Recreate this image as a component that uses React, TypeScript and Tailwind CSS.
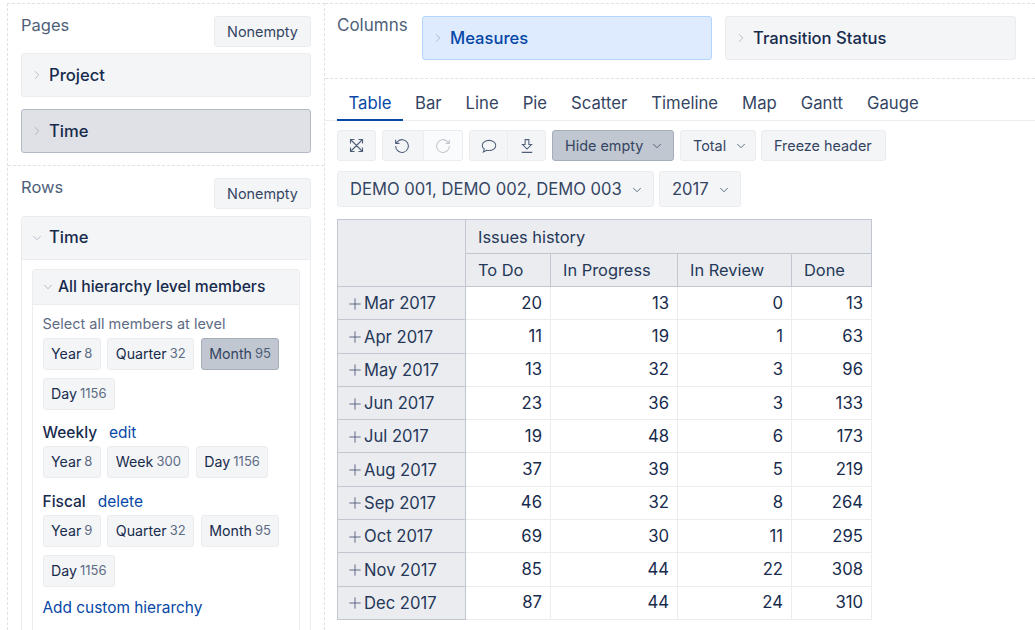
import React from "react";
import { ChevronRight, ChevronDown, Plus } from "lucide-react";

const Chev = ({ open, cls = "text-[#8d96a8]" }: { open?: boolean; cls?: string }) =>
  open ? <ChevronDown size={14} strokeWidth={1} className={cls} /> : <ChevronRight size={14} strokeWidth={1} className={cls} />;

const Nonempty = () => (
  <div className="flex h-[31px] w-[97px] items-center justify-center rounded-[3px] border border-[#ebecf0] bg-[#f4f5f7] text-[14.4px] text-[#344563]">Nonempty</div>
);

const Dim = ({ label, cls = "", h = "h-[44px]" }: { label: string; cls?: string; h?: string }) => (
  <div className={`flex ${h} items-center rounded-[3px] border pl-[8px] text-[16.6px] font-[450] text-[#172b4d] ${cls || "border-[#ebecf0] bg-[#f4f5f7]"}`}>
    <Chev />
    <span className="ml-[5px]">{label}</span>
  </div>
);

const Chip = ({ name, n, active }: { name: string; n: number; active?: boolean }) => (
  <div className={`flex h-[32px] items-center rounded-[3px] border px-[7.5px] text-[14.2px] ${active ? "border-[#a5adba] bg-[#c1c7d0] text-[#344563]" : "border-[#ebecf0] bg-[#f4f5f7] text-[#172b4d]"}`}>
    {name}
    <span className={`ml-[3px] text-[13px] ${active ? "text-[#505f79]" : "text-[#5e6c84]"}`}>{n}</span>
  </div>
);

const ChipRow = ({ first, children }: { first?: boolean; children: React.ReactNode }) => (
  <div className={`${first ? "mt-[5px]" : "mt-[3px]"} flex flex-wrap gap-x-[6.5px] gap-y-[8px]`}>{children}</div>
);

const rows: [string, number, number, number, number][] = [
  ["Mar 2017", 20, 13, 0, 13],
  ["Apr 2017", 11, 19, 1, 63],
  ["May 2017", 13, 32, 3, 96],
  ["Jun 2017", 23, 36, 3, 133],
  ["Jul 2017", 19, 48, 6, 173],
  ["Aug 2017", 37, 39, 5, 219],
  ["Sep 2017", 46, 32, 8, 264],
  ["Oct 2017", 69, 30, 11, 295],
  ["Nov 2017", 85, 44, 22, 308],
  ["Dec 2017", 87, 44, 24, 310],
];

const Btn = ({ children, cls = "" }: { children: React.ReactNode; cls?: string }) => (
  <div className={`flex h-[31px] items-center rounded-[3px] border text-[14.4px] ${cls || "border-[#ebecf0] bg-[#f4f5f7] text-[#344563]"}`}>{children}</div>
);

const IconBox = ({ children, cls = "" }: { children: React.ReactNode; cls?: string }) => (
  <div className={`flex h-full flex-1 items-center justify-center ${cls}`}>{children}</div>
);

const thCls = "border border-[#c1c7d0] bg-[#ebecf0] font-normal";
const tdCls = "border border-[#ebecf0] pr-[8px] text-right text-[16.7px] text-[#172b4d]";

export default function App() {
  return (
    <div className="h-[630px] w-[1035px] overflow-hidden bg-white font-['Inter','Liberation_Sans',sans-serif]">
      <div className="flex pt-[3px]">
        <div className="ml-[7px] h-[627px] w-[318px] shrink-0 border-x border-t border-dashed border-[#dfe1e6]">
          <section className="h-[162px] border-b border-dashed border-[#dfe1e6] px-[13px] pt-[12px]">
            <div className="flex items-start justify-between">
              <span className="text-[16.5px] leading-[18px] text-[#505f79]">Pages</span>
              <Nonempty />
            </div>
            <div className="mt-[6px] flex flex-col gap-[12px]">
              <Dim label="Project" />
              <Dim label="Time" cls="border-[#b3bac5] bg-[#dfe1e6]" />
            </div>
          </section>
          <section className="px-[13px] pt-[12px]">
            <div className="flex items-start justify-between">
              <span className="text-[16.5px] leading-[18px] text-[#505f79]">Rows</span>
              <Nonempty />
            </div>
            <div className="mt-[7px] rounded-[3px] border border-[#ebecf0] pb-[20px]">
              <div className="flex h-[43px] items-center border-b border-[#ebecf0] bg-[#f4f5f7] pb-[1px] pl-[8px] text-[16.6px] font-[450] text-[#172b4d]">
                <Chev open />
                <span className="ml-[5px]">Time</span>
              </div>
              <div className="mx-[10px] mt-[9px] rounded-[3px] border border-[#ebecf0]">
                <div className="flex h-[35px] items-center border-b border-[#ebecf0] bg-[#f4f5f7] pl-[8px] text-[15.7px] font-[450] text-[#172b4d]">
                  <Chev open />
                  <span className="ml-[3px]">All hierarchy level members</span>
                </div>
                <div className="pb-[40px] pl-[9.5px] pr-[6px] pt-[10px]">
                  <div className="text-[14.5px] leading-[18px] text-[#5e6c84]">Select all members at level</div>
                  <ChipRow first>
                    <Chip name="Year" n={8} />
                    <Chip name="Quarter" n={32} />
                    <Chip name="Month" n={95} active />
                    <Chip name="Day" n={1156} />
                  </ChipRow>
                  <div className="mt-[13px] flex h-[20px] items-center gap-[12px] text-[15.5px] font-[450] text-[#172b4d]">
                    Weekly<span className="font-normal text-[#0747a6]">edit</span>
                  </div>
                  <ChipRow>
                    <Chip name="Year" n={8} />
                    <Chip name="Week" n={300} />
                    <Chip name="Day" n={1156} />
                  </ChipRow>
                  <div className="mt-[14px] flex h-[20px] items-center gap-[12px] text-[15.5px] font-[450] text-[#172b4d]">
                    Fiscal<span className="font-normal text-[#0747a6]">delete</span>
                  </div>
                  <ChipRow>
                    <Chip name="Year" n={9} />
                    <Chip name="Quarter" n={32} />
                    <Chip name="Month" n={95} />
                    <Chip name="Day" n={1156} />
                  </ChipRow>
                  <div className="mt-[9px] text-[15.4px] text-[#0747a6]">Add custom hierarchy</div>
                </div>
              </div>
            </div>
          </section>
        </div>

        <div className="min-w-0 flex-1 border-t border-dashed border-[#dfe1e6]">
          <section className="flex h-[75px] border-b border-dashed border-[#dfe1e6] pl-[12px] pt-[12px]">
            <span className="w-[85px] text-[17px] leading-[18px] text-[#505f79]">Columns</span>
            <div className="flex w-[290px] shrink-0 flex-col">
              <Dim label="Measures" cls="border-[#b3d4ff] bg-[#deebff] !text-[#0747a6]" />
            </div>
            <div className="ml-[13px] flex w-[291px] shrink-0 flex-col">
              <Dim label="Transition Status" />
            </div>
          </section>

          <div className="mt-[11px] flex h-[31px] border-b border-[#ebecf0] text-[16.7px] text-[#344563]">
            <div className="ml-[12px] flex h-[31px] w-[66px] items-start justify-center border-b-2 border-[#0747a6] pt-[1px] text-[#0747a6]">Table</div>
            {["Bar", "Line", "Pie", "Scatter", "Timeline", "Map", "Gantt", "Gauge"].map((t) => (
              <div key={t} className="flex h-[31px] items-start px-[12px] pt-[1px]">{t}</div>
            ))}
          </div>

          <div className="ml-[12px] mt-[9px] flex gap-[6px]">
            <div className="w-[39px]">
              <Btn>
                <IconBox>
                  <svg width="15" height="15" viewBox="0 0 15 15" fill="none" stroke="#505f79" strokeWidth="1.1"><path d="M1.500 1.500l12 12M13.500 1.500l-12 12M1.500 5.500v-4h4M9.500 1.500h4v4M1.500 9.500v4h4M9.500 13.500h4v-4" /></svg>
                </IconBox>
              </Btn>
            </div>
            <div className="w-[81px]">
              <Btn>
                <IconBox cls="border-r border-[#ebecf0] pr-[2px]">
                  <svg width="18" height="18" viewBox="0 0 24 24" fill="none" stroke="#505f79" strokeWidth="1.400"><path d="M3.500 12a8.500 8.500 0 1 0 2.800-6.300L3.500 8.500M3.500 3.500v5h5" /></svg>
                </IconBox>
                <IconBox cls="rounded-r-[3px] bg-[#fafbfc]">
                  <svg width="18" height="18" viewBox="0 0 24 24" fill="none" stroke="#c1c7d0" strokeWidth="1.400"><path d="M20.500 12a8.500 8.500 0 1 1-2.800-6.300L20.500 8.500M20.500 3.500v5h-5" /></svg>
                </IconBox>
              </Btn>
            </div>
            <div className="w-[77px]">
              <Btn>
                <IconBox cls="border-r border-[#ebecf0]">
                  <svg width="18" height="18" viewBox="0 0 24 24" fill="none" stroke="#505f79" strokeWidth="1.400"><path d="M12 4.500c5 0 9 3 9 6.800s-4 6.800-9 6.800c-1 0-2-.1-2.900-.4L4.500 20l1.300-3.900C4 14.800 3 13.200 3 11.300 3 7.500 7 4.500 12 4.500z" /></svg>
                </IconBox>
                <IconBox>
                  <svg width="18" height="18" viewBox="0 0 24 24" fill="none" stroke="#505f79" strokeWidth="1.400"><path d="M9.500 3.500h5V10h3.500L12 16l-6-6h3.500zM5 20.500h14" /></svg>
                </IconBox>
              </Btn>
            </div>
            <div className="w-[122px]">
              <Btn cls="border-[#a5adba] bg-[#c1c7d0] text-[#344563]">
                <span className="ml-[12px]">Hide empty</span>
                <ChevronDown size={14} strokeWidth={1.3} className="ml-[7px]" />
              </Btn>
            </div>
            <div className="w-[76px]">
              <Btn>
                <span className="ml-[12px]">Total</span>
                <ChevronDown size={14} strokeWidth={1.3} className="ml-[8px]" />
              </Btn>
            </div>
            <div className="-ml-[1px] w-[125px]">
              <Btn><span className="pl-[12px]">Freeze header</span></Btn>
            </div>
          </div>

          <div className="ml-[12px] mt-[10px] flex gap-[5px]">
            <div className="flex h-[36px] w-[317px] items-center rounded-[3px] border border-[#ebecf0] bg-[#f4f5f7] pt-[1px] text-[16.6px] text-[#344563]">
              <span className="ml-[12px]">DEMO 001, DEMO 002, DEMO 003</span>
              <ChevronDown size={14} strokeWidth={1.3} className="ml-[8px]" />
            </div>
            <div className="flex h-[36px] w-[82px] items-center rounded-[3px] border border-[#ebecf0] bg-[#f4f5f7] pt-[1px] text-[16.6px] text-[#344563]">
              <span className="ml-[12px]">2017</span>
              <ChevronDown size={14} strokeWidth={1.3} className="ml-[8px]" />
            </div>
          </div>

          <table className="ml-[12px] mt-[12px] w-[534px] table-fixed border-collapse border border-[#c1c7d0] text-[16.4px] text-[#253858]">
            <colgroup>
              <col className="w-[128px]" />
              <col className="w-[85px]" />
              <col className="w-[127px]" />
              <col className="w-[114px]" />
              <col className="w-[80px]" />
            </colgroup>
            <thead>
              <tr className="h-[34px]">
                <th rowSpan={2} className={thCls}></th>
                <th colSpan={4} className={`${thCls} pl-[12px] pt-[1px] text-left`}>Issues history</th>
              </tr>
              <tr className="h-[33px]">
                {["To Do", "In Progress", "In Review", "Done"].map((h) => (
                  <th key={h} className={`${thCls} pl-[12px] text-left`}>{h}</th>
                ))}
              </tr>
            </thead>
            <tbody>
              {rows.map(([m, a, b, c, d]) => (
                <tr key={m} className="h-[33.3px]">
                  <th className={`${thCls} text-left`}>
                    <div className="flex items-center pl-[8px] pt-[1px] text-[16.6px]">
                      <Plus size={18} strokeWidth={1.2} className="text-[#505f79]" />
                      <span>{m}</span>
                    </div>
                  </th>
                  <td className={tdCls}>{a}</td>
                  <td className={tdCls}>{b}</td>
                  <td className={tdCls}>{c}</td>
                  <td className={tdCls}>{d}</td>
                </tr>
              ))}
            </tbody>
          </table>
        </div>
      </div>
    </div>
  );
}
